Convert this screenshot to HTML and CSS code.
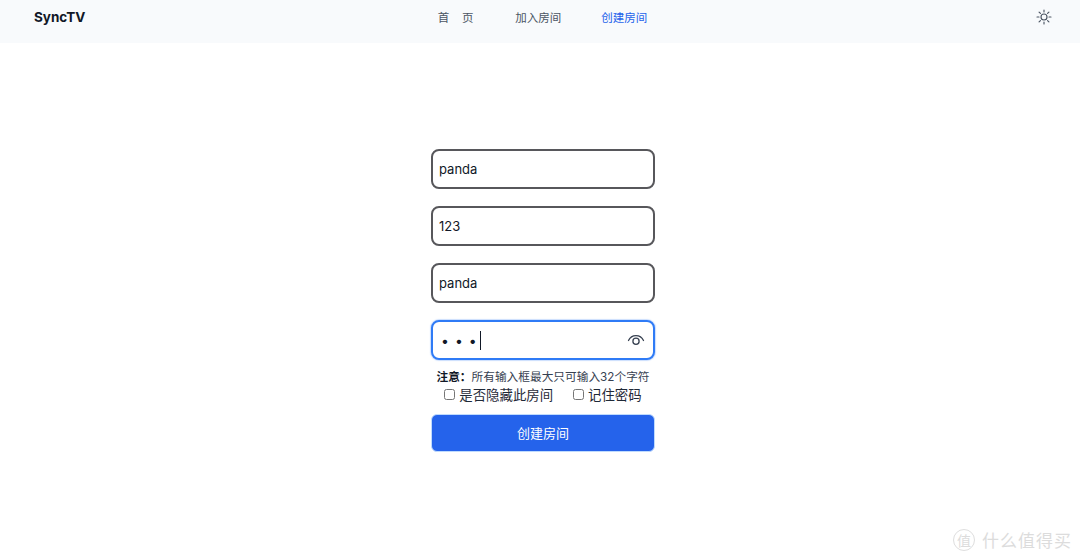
FILE: index.html
```html
<!DOCTYPE html>
<html lang="zh-CN">
<head>
  <meta charset="UTF-8" />
  <title>SyncTV</title>
  <link rel="stylesheet" href="styles.css">
</head>
<body>

  <header class="navbar">
    <div class="logo">SyncTV</div>
    <nav class="nav-links">
      <a class="nav-link nav-home">首　页</a>
      <a class="nav-link">加入房间</a>
      <a class="nav-link active">创建房间</a>
    </nav>
    <button class="theme-btn" aria-label="theme">
      <svg width="16" height="16" viewBox="0 0 24 24" fill="none" stroke="#4b5563" stroke-width="1.7" stroke-linecap="round">
        <circle cx="12" cy="12" r="4.5"/>
        <path d="M12 1.5v3M12 19.5v3M1.5 12h3M19.5 12h3M4.6 4.6l2.1 2.1M17.3 17.3l2.1 2.1M4.6 19.4l2.1-2.1M17.3 6.7l2.1-2.1"/>
      </svg>
    </button>
  </header>

  <main class="content">
    <form class="room-form">
      <input class="field" type="text" value="panda" />
      <input class="field" type="text" value="123" />
      <input class="field" type="text" value="panda" />

      <!-- Password, focused -->
      <div class="field field-focus">
        <span class="dots">•••</span>
        <span class="caret"></span>
        <svg class="eye" width="18" height="18" viewBox="0 0 18 18" fill="none" stroke="#374151" stroke-width="1.3" stroke-linecap="round">
          <path d="M1.5 9.5C3 6.3 5.7 4.6 9 4.6s6 1.7 7.5 4.9"/>
          <circle cx="9" cy="10.2" r="3.1"/>
        </svg>
      </div>

      <p class="note"><b>注意：</b>所有输入框最大只可输入32个字符</p>

      <div class="options">
        <label class="option"><input type="checkbox" />是否隐藏此房间</label>
        <label class="option"><input type="checkbox" />记住密码</label>
      </div>

      <button type="button" class="submit-btn">创建房间</button>
    </form>
  </main>

  <div class="watermark"><span class="watermark-badge">值</span>什么值得买</div>

</body>
</html>
```

FILE: styles.css
```css
* {
  box-sizing: border-box;
  margin: 0;
  padding: 0;
}

body {
  font-family: Inter, "Noto Sans CJK SC", sans-serif;
  background-color: #ffffff;
  color: #111827;
  height: 560px;
  overflow: hidden;
}

/* Top bar */
.navbar {
  height: 43px;
  background-color: #f8fafc;
  display: grid;
  grid-template-columns: 1fr auto 1fr;
  align-items: center;
  padding: 0 28px 9px 34px;
}

.logo {
  font-size: 13.5px;
  font-weight: 700;
  color: #111827;
}

.nav-links {
  display: flex;
  gap: 40px;
  margin-left: -1px;
}

.nav-link {
  font-size: 11.5px;
  color: #4b5563;
}

.nav-home {
  letter-spacing: 0.7px;
  margin-right: 1px;
}

.nav-link.active {
  color: #2563eb;
}

.theme-btn {
  justify-self: end;
  display: flex;
  background: none;
  border: none;
}

/* Form */
.content {
  display: flex;
  justify-content: center;
  padding-top: 106px;
  padding-left: 6px;
}

.room-form {
  width: 224px;
  display: flex;
  flex-direction: column;
  align-items: center;
}

.field {
  width: 100%;
  height: 40px;
  flex: none;
  margin-bottom: 17px;
  padding: 0 6px;
  border: 2px solid #57575b;
  border-radius: 8px;
  background-color: #ffffff;
  font-family: inherit;
  font-size: 13px;
  color: #111827;
  outline: none;
}

.field-focus {
  display: flex;
  align-items: center;
  margin-bottom: 9px;
  border-color: #2f7bf6;
  box-shadow: 0 0 1px 1px rgba(47, 123, 246, 0.25);
}

.dots {
  font-size: 14px;
  letter-spacing: 6px;
  margin-left: 2px;
  margin-right: -3px;
}

.caret {
  width: 1px;
  height: 19px;
  background-color: #111827;
}

.eye {
  margin-left: auto;
  margin-right: 2px;
}

.note {
  font-size: 11.7px;
  line-height: 16px;
  color: #374151;
  white-space: nowrap;
}

.note b {
  color: #111827;
}

.options {
  display: flex;
  gap: 20px;
  height: 20px;
  align-items: center;
  margin-top: -1px;
}

.option {
  display: flex;
  align-items: center;
  gap: 4px;
  font-size: 13.4px;
  color: #1f2937;
}

.option input {
  width: 11px;
  height: 11px;
  margin: 0;
}

.submit-btn {
  width: 100%;
  height: 38px;
  margin-top: 10px;
  padding-bottom: 2px;
  border: 1px solid #bfdbfe;
  border-radius: 6px;
  background-color: #2563eb;
  color: #ffffff;
  font-family: inherit;
  font-size: 13px;
}

/* Site watermark, lies over the page */
.watermark {
  position: absolute;
  left: 953px;
  top: 527px;
  display: flex;
  align-items: center;
  gap: 7px;
  font-size: 17px;
  letter-spacing: 1px;
  color: #dcdcdc;
}

.watermark-badge {
  width: 22px;
  height: 22px;
  border: 1px solid #dedede;
  border-radius: 50%;
  display: flex;
  align-items: center;
  justify-content: center;
  font-size: 14px;
  letter-spacing: 0;
}
```
